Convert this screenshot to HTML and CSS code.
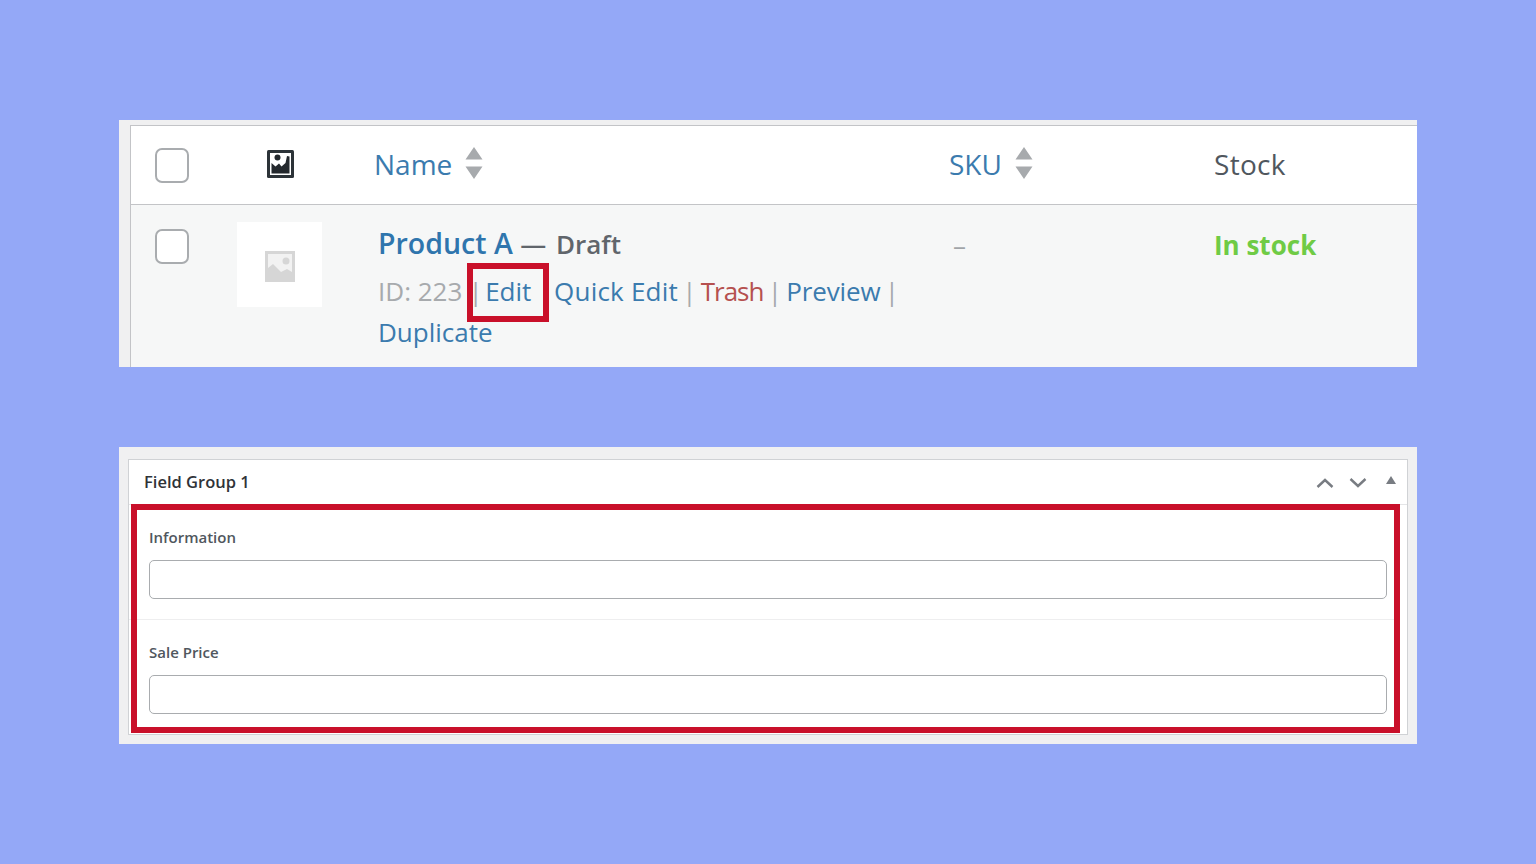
FILE: index.html
```html
<!DOCTYPE html>
<html lang="en">
<head>
<meta charset="utf-8">
<title>Product list and field group</title>
<link rel="stylesheet" href="styles.css">
</head>
<body>
<section class="panel products">
  <div class="table">
    <div class="row head">
      <div class="cell"><span class="check"></span></div>
      <div class="cell thumb-cell">
        <svg class="img-icon" viewBox="0 0 27 28"><rect width="27" height="28" rx="1.5" fill="#2c3338"/><rect x="3" y="3" width="21" height="22" fill="#fff"/><path d="M4.500 23.500V13l4 3.500 3.500-3 2.500 3 4-3.500 1.500-7 2.500.5v17z" fill="#23282d"/><circle cx="10.500" cy="7.500" r="3" fill="#23282d"/></svg>
      </div>
      <div class="cell name-head"><span class="col-link">Name</span><svg class="sort" viewBox="0 0 18 32"><path d="M9 0l8.500 12.500H.5zM.5 19.500h17L9 32z" fill="#a7aaad"/></svg></div>
      <div class="cell"><span class="col-link">SKU</span><svg class="sort" viewBox="0 0 18 32"><path d="M9 0l8.500 12.500H.5zM.5 19.500h17L9 32z" fill="#a7aaad"/></svg></div>
      <div class="cell"><span class="col-plain">Stock</span></div>
    </div>
    <div class="row item">
      <div class="cell"><span class="check"></span></div>
      <div class="cell thumb-cell">
        <div class="thumb">
          <svg class="placeholder" viewBox="0 0 30 31"><path d="M0 0h30v31H0z" fill="#d6d6d6"/><path d="M3 3h24v18l-5-3-6 3-8-8-5 4z" fill="#f2f2f2"/><circle cx="21" cy="10" r="3.500" fill="#d6d6d6"/></svg>
        </div>
      </div>
      <div class="cell name-cell">
        <div class="title"><span class="title-link">Product A</span> <span class="state">— Draft</span></div>
        <div class="actions"><span class="id">ID: 223</span> <span class="sep first-sep">|</span> <span class="link edit">Edit</span> <span class="gap"></span><span class="link quick">Quick Edit</span> <span class="sep">|</span> <span class="trash">Trash</span> <span class="sep">|</span> <span class="link preview">Preview</span> <span class="sep">|</span><br><span class="link">Duplicate</span></div>
      </div>
      <div class="cell sku-cell">–</div>
      <div class="cell stock-cell">In stock</div>
    </div>
  </div>
</section>

<section class="panel group">
  <div class="box">
    <header class="box-head">
      <h2 class="box-title">Field Group 1</h2>
      <div class="box-tools">
        <svg class="chev" viewBox="0 0 18 10"><path d="M1.500 9L9 2l7.500 7" fill="none" stroke="#787c82" stroke-width="2.400"/></svg>
        <svg class="chev" viewBox="0 0 18 10"><path d="M1.500 1L9 8l7.500-7" fill="none" stroke="#787c82" stroke-width="2.400"/></svg>
        <svg class="caret" viewBox="0 0 10 8"><path d="M5 0l5 8H0z" fill="#787c82"/></svg>
      </div>
    </header>
    <div class="fields">
      <div class="field">
        <label class="field-label" for="info">Information</label>
        <input class="field-input" id="info" type="text">
      </div>
      <div class="field field-next">
        <label class="field-label" for="sale">Sale Price</label>
        <input class="field-input" id="sale" type="text">
      </div>
    </div>
  </div>
</section>
</body>
</html>
```

FILE: styles.css
```css
*, *::after {
  box-sizing: border-box;
}

html, body {
  margin: 0;
  height: 864px;
  overflow: hidden;
}

body {
  background: #94a8f7;
  padding: 120px 119px 0;
  font-family: "Open Sans", "Noto Sans", sans-serif;
}

.panel {
  background: #f0f0f1;
  width: 1298px;
}

.products {
  height: 247px;
  padding: 5px 0 0 11px;
}

.table {
  height: 242px;
  border-left: 1px solid #c3c4c7;
  border-top: 1px solid #c3c4c7;
}

.row {
  display: grid;
  grid-template-columns: 106px 138px 574px 265px 1fr;
}

.head {
  height: 79px;
  background: #fff;
  border-bottom: 1px solid #c3c4c7;
}

.head .cell {
  display: flex;
  align-items: center;
}

.item {
  height: 162px;
  background: #f6f7f7;
}

.cell {
  min-width: 0;
}

.check {
  display: block;
  width: 34px;
  height: 35px;
  margin-left: 24px;
  background: #fff;
  border: 2px solid #a9acaf;
  border-radius: 7px;
}

.item .check {
  margin-top: 24px;
}

.head .check {
  margin-top: 0;
}

.head .thumb-cell {
  padding-left: 30px;
}

.img-icon {
  width: 27px;
  height: 28px;
  margin-top: -3px;
}

.name-head {
  margin-left: -1px;
}

.col-link {
  color: #3b7bae;
  font-size: 28px;
  line-height: 38px;
  margin-top: -2px;
}

.col-plain {
  color: #50575e;
  font-size: 28px;
  line-height: 38px;
  letter-spacing: 0.3px;
  margin-top: -2px;
}

.sort {
  width: 18px;
  height: 32px;
  margin-left: 13px;
  margin-top: -4px;
}

.thumb {
  width: 85px;
  height: 85px;
  margin-top: 17px;
  background: #fff;
  display: flex;
  align-items: center;
  justify-content: center;
}

.placeholder {
  width: 30px;
  height: 31px;
  margin-top: 3px;
}

.name-cell {
  padding: 19px 0 0 3px;
}

.title {
  height: 40px;
  font-size: 28.500px;
  line-height: 38px;
  font-weight: 600;
}

.title-link {
  color: #2f75ad;
}

.state {
  color: #60656b;
  font-size: 26px;
  word-spacing: 3px;
}

.actions {
  font-size: 26px;
  line-height: 41px;
  margin-top: 7px;
  white-space: nowrap;
}

.link {
  color: #3b7bae;
}

.quick {
  letter-spacing: 0.2px;
}

.preview {
  letter-spacing: -0.15px;
}

.trash {
  color: #b5504f;
  letter-spacing: -1px;
}

.id {
  color: #a7aaad;
  margin-right: 2px;
}

.sep {
  color: #a7aaad;
  margin: 0 -2.500px;
}

.first-sep {
  margin-right: -4.500px;
}

.edit {
  position: relative;
}

.edit::after {
  content: "";
  position: absolute;
  left: -18px;
  top: -10px;
  width: 82px;
  height: 59px;
  border: 6px solid #c9102a;
}

.gap {
  display: inline-block;
  width: 16px;
}

.sku-cell {
  padding: 22px 0 0 4px;
  color: #a0a4a8;
  font-size: 26px;
  line-height: 36px;
}

.stock-cell {
  padding: 21px 0 0 0;
  color: #6fcb45;
  font-size: 26px;
  font-weight: 700;
  line-height: 38px;
}

.group {
  height: 297px;
  margin-top: 80px;
  padding: 12px 9px 9px;
}

.box {
  height: 276px;
  background: #fff;
  border: 1px solid #d0d2d5;
}

.box-head {
  height: 45px;
  display: flex;
  align-items: center;
  justify-content: space-between;
  padding: 0 11px 0 15px;
  border-bottom: 1px solid #e4e5e7;
}

.box-title {
  margin: 0;
  color: #2f3338;
  font-size: 16.500px;
  line-height: 24px;
  font-weight: 600;
}

.box-tools {
  display: flex;
  align-items: center;
  gap: 15px;
  margin-top: -1px;
}

.chev {
  width: 18px;
  height: 10px;
  margin-top: 2px;
}

.caret {
  width: 10px;
  height: 8px;
  margin: -4px 0 0 4px;
}

.fields {
  position: relative;
  height: 229px;
}

.fields::after {
  content: "";
  position: absolute;
  left: 2px;
  top: -1px;
  width: 1269px;
  height: 229px;
  border: 6px solid #c9102a;
  pointer-events: none;
}

.field {
  padding: 21px 20px 0;
  height: 114px;
}

.field-next {
  border-top: 1px solid #eeeeef;
  height: 115px;
  margin-right: 10px;
}

.field-label {
  display: block;
  color: #50575e;
  font-size: 15px;
  line-height: 22px;
  font-weight: 600;
}

.field-input {
  display: block;
  width: 1238px;
  height: 39px;
  margin-top: 12px;
  background: #fff;
  border: 1px solid #a9acaf;
  border-radius: 5px;
  padding: 0;
}
```
